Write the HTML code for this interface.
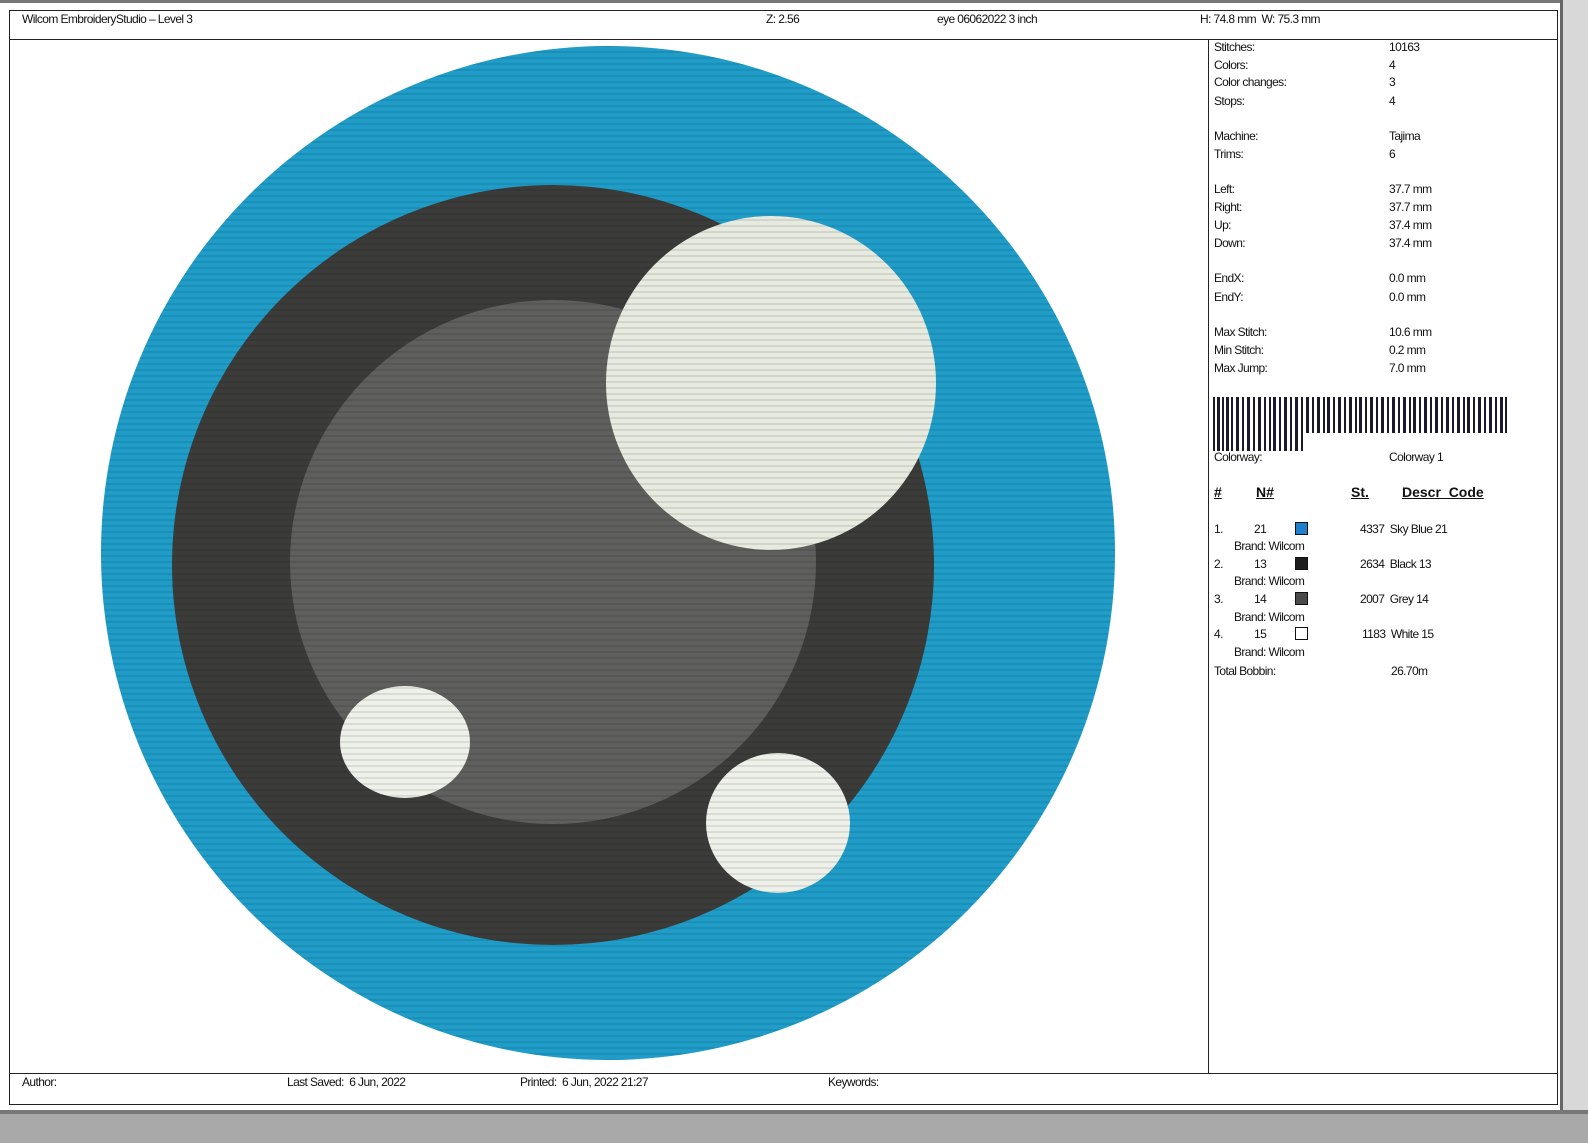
<!DOCTYPE html>
<html><head><meta charset="utf-8"><style>
html,body{margin:0;padding:0}
body{width:1588px;height:1143px;background:#fff;position:relative;overflow:hidden;font-family:"Liberation Sans",Arial,sans-serif;font-size:12px;color:#111;letter-spacing:-0.6px}
.t{position:absolute;white-space:nowrap;line-height:14px}
.u{text-decoration:underline;font-weight:bold;font-size:14px;letter-spacing:0}
.sw{position:absolute;width:11px;height:11px;border:1px solid #111}
</style></head><body>
<div style="position:absolute;left:0;top:0;width:1588px;height:3px;background:#777"></div>
<div style="position:absolute;left:1562px;top:0;width:26px;height:1143px;background:#d8d8d8"></div>
<div style="position:absolute;left:1560px;top:0;width:3px;height:1112px;background:#666"></div>
<div style="position:absolute;left:0;top:1110px;width:1588px;height:33px;background:#a9a9a9"></div>
<div style="position:absolute;left:0;top:1110px;width:1588px;height:4px;background:#777"></div>
<div style="position:absolute;left:9px;top:10px;width:1547px;height:1093px;border:1px solid #222"></div>
<div style="position:absolute;left:9px;top:39px;width:1548px;height:1px;background:#222"></div>
<div style="position:absolute;left:9px;top:1073px;width:1548px;height:1px;background:#222"></div>
<div style="position:absolute;left:1208px;top:39px;width:1px;height:1035px;background:#222"></div>

<div class="t" style="left:22px;top:12px">Wilcom EmbroideryStudio – Level 3</div>
<div class="t" style="left:766px;top:12px">Z: 2.56</div>
<div class="t" style="left:937px;top:12px">eye 06062022 3 inch</div>
<div class="t" style="left:1200px;top:12px">H: 74.8 mm&nbsp;&nbsp;W: 75.3 mm</div>

<div class="t" style="left:22px;top:1075px">Author:</div>
<div class="t" style="left:287px;top:1075px">Last Saved:&nbsp; 6 Jun, 2022</div>
<div class="t" style="left:520px;top:1075px">Printed:&nbsp; 6 Jun, 2022 21:27</div>
<div class="t" style="left:828px;top:1075px">Keywords:</div>

<svg style="position:absolute;left:0;top:0" width="1200" height="1100">
<defs>
<pattern id="st" width="12" height="6" patternUnits="userSpaceOnUse">
<rect y="3" width="12" height="2" fill="#000" opacity="0.09"/>
</pattern>
</defs>
<ellipse cx="608" cy="553" rx="507" ry="507" fill="#1f9dc8"/>
<ellipse cx="553" cy="565" rx="381" ry="380" fill="#3b3b39"/>
<ellipse cx="553" cy="562" rx="263" ry="262" fill="#5f605d"/>
<ellipse cx="771" cy="383" rx="165" ry="167" fill="#e6eadf"/>
<ellipse cx="405" cy="742" rx="65" ry="56" fill="#eef1ea"/>
<ellipse cx="778" cy="823" rx="72" ry="70" fill="#eef1ea"/>
<ellipse cx="608" cy="553" rx="507" ry="507" fill="url(#st)"/>
</svg>

<div class="t" style="left:1214px;top:40px">Stitches:</div><div class="t" style="left:1389px;top:40px">10163</div>
<div class="t" style="left:1214px;top:58px">Colors:</div><div class="t" style="left:1389px;top:58px">4</div>
<div class="t" style="left:1214px;top:75px">Color changes:</div><div class="t" style="left:1389px;top:75px">3</div>
<div class="t" style="left:1214px;top:94px">Stops:</div><div class="t" style="left:1389px;top:94px">4</div>
<div class="t" style="left:1214px;top:129px">Machine:</div><div class="t" style="left:1389px;top:129px">Tajima</div>
<div class="t" style="left:1214px;top:147px">Trims:</div><div class="t" style="left:1389px;top:147px">6</div>
<div class="t" style="left:1214px;top:182px">Left:</div><div class="t" style="left:1389px;top:182px">37.7 mm</div>
<div class="t" style="left:1214px;top:200px">Right:</div><div class="t" style="left:1389px;top:200px">37.7 mm</div>
<div class="t" style="left:1214px;top:218px">Up:</div><div class="t" style="left:1389px;top:218px">37.4 mm</div>
<div class="t" style="left:1214px;top:236px">Down:</div><div class="t" style="left:1389px;top:236px">37.4 mm</div>
<div class="t" style="left:1214px;top:271px">EndX:</div><div class="t" style="left:1389px;top:271px">0.0 mm</div>
<div class="t" style="left:1214px;top:290px">EndY:</div><div class="t" style="left:1389px;top:290px">0.0 mm</div>
<div class="t" style="left:1214px;top:325px">Max Stitch:</div><div class="t" style="left:1389px;top:325px">10.6 mm</div>
<div class="t" style="left:1214px;top:343px">Min Stitch:</div><div class="t" style="left:1389px;top:343px">0.2 mm</div>
<div class="t" style="left:1214px;top:361px">Max Jump:</div><div class="t" style="left:1389px;top:361px">7.0 mm</div>

<svg style="position:absolute;left:1213px;top:397px" width="300" height="55">
<g fill="#1a1a2a">
<rect x="0" y="0" width="2" height="54"/><rect x="4" y="0" width="3" height="54"/><rect x="9" y="0" width="2" height="54"/><rect x="13" y="0" width="3" height="54"/><rect x="18" y="0" width="2" height="54"/><rect x="23" y="0" width="3" height="54"/><rect x="29" y="0" width="2" height="54"/><rect x="34" y="0" width="3" height="54"/><rect x="40" y="0" width="2" height="54"/><rect x="45" y="0" width="3" height="54"/><rect x="51" y="0" width="2" height="54"/><rect x="56" y="0" width="2" height="54"/><rect x="60" y="0" width="3" height="54"/><rect x="66" y="0" width="2" height="54"/><rect x="71" y="0" width="3" height="54"/><rect x="77" y="0" width="2" height="54"/><rect x="82" y="0" width="3" height="54"/><rect x="88" y="0" width="2" height="54"/>
<rect x="93" y="0" width="3" height="36"/><rect x="99" y="0" width="2" height="36"/><rect x="104" y="0" width="3" height="36"/><rect x="110" y="0" width="2" height="36"/><rect x="114" y="0" width="3" height="36"/><rect x="120" y="0" width="2" height="36"/><rect x="125" y="0" width="3" height="36"/><rect x="131" y="0" width="2" height="36"/><rect x="136" y="0" width="3" height="36"/><rect x="142" y="0" width="2" height="36"/><rect x="146" y="0" width="3" height="36"/><rect x="152" y="0" width="2" height="36"/><rect x="157" y="0" width="3" height="36"/><rect x="163" y="0" width="2" height="36"/><rect x="168" y="0" width="3" height="36"/><rect x="174" y="0" width="2" height="36"/><rect x="179" y="0" width="3" height="36"/><rect x="185" y="0" width="2" height="36"/><rect x="190" y="0" width="3" height="36"/><rect x="196" y="0" width="2" height="36"/><rect x="200" y="0" width="3" height="36"/><rect x="206" y="0" width="2" height="36"/><rect x="211" y="0" width="3" height="36"/><rect x="217" y="0" width="2" height="36"/><rect x="222" y="0" width="3" height="36"/><rect x="228" y="0" width="2" height="36"/><rect x="233" y="0" width="3" height="36"/><rect x="239" y="0" width="2" height="36"/><rect x="244" y="0" width="3" height="36"/><rect x="250" y="0" width="2" height="36"/><rect x="254" y="0" width="3" height="36"/><rect x="260" y="0" width="2" height="36"/><rect x="265" y="0" width="3" height="36"/><rect x="271" y="0" width="2" height="36"/><rect x="276" y="0" width="3" height="36"/><rect x="282" y="0" width="2" height="36"/><rect x="287" y="0" width="3" height="36"/><rect x="292" y="0" width="2" height="36"/>
</g></svg>

<div class="t" style="left:1214px;top:450px">Colorway:</div><div class="t" style="left:1389px;top:450px">Colorway 1</div>
<div class="t u" style="left:1214px;top:485px">#</div>
<div class="t u" style="left:1256px;top:485px">N#</div>
<div class="t u" style="left:1351px;top:485px">St.</div>
<div class="t u" style="left:1402px;top:485px">Descr&nbsp; Code</div>

<div class="t" style="left:1214px;top:522px">1.</div><div class="t" style="left:1254px;top:522px">21</div><div class="sw" style="left:1295px;top:522px;background:#1e7fcf"></div><div class="t" style="left:1360px;top:522px">4337&nbsp; Sky Blue 21</div>
<div class="t" style="left:1234px;top:539px">Brand: Wilcom</div>
<div class="t" style="left:1214px;top:557px">2.</div><div class="t" style="left:1254px;top:557px">13</div><div class="sw" style="left:1295px;top:557px;background:#1c1c1c"></div><div class="t" style="left:1360px;top:557px">2634&nbsp; Black 13</div>
<div class="t" style="left:1234px;top:574px">Brand: Wilcom</div>
<div class="t" style="left:1214px;top:592px">3.</div><div class="t" style="left:1254px;top:592px">14</div><div class="sw" style="left:1295px;top:592px;background:#4a4a4a"></div><div class="t" style="left:1360px;top:592px">2007&nbsp; Grey 14</div>
<div class="t" style="left:1234px;top:610px">Brand: Wilcom</div>
<div class="t" style="left:1214px;top:627px">4.</div><div class="t" style="left:1254px;top:627px">15</div><div class="sw" style="left:1295px;top:627px;background:#fff"></div><div class="t" style="left:1362px;top:627px">1183&nbsp; White 15</div>
<div class="t" style="left:1234px;top:645px">Brand: Wilcom</div>
<div class="t" style="left:1214px;top:664px">Total Bobbin:</div><div class="t" style="left:1391px;top:664px">26.70m</div>
</body></html>
